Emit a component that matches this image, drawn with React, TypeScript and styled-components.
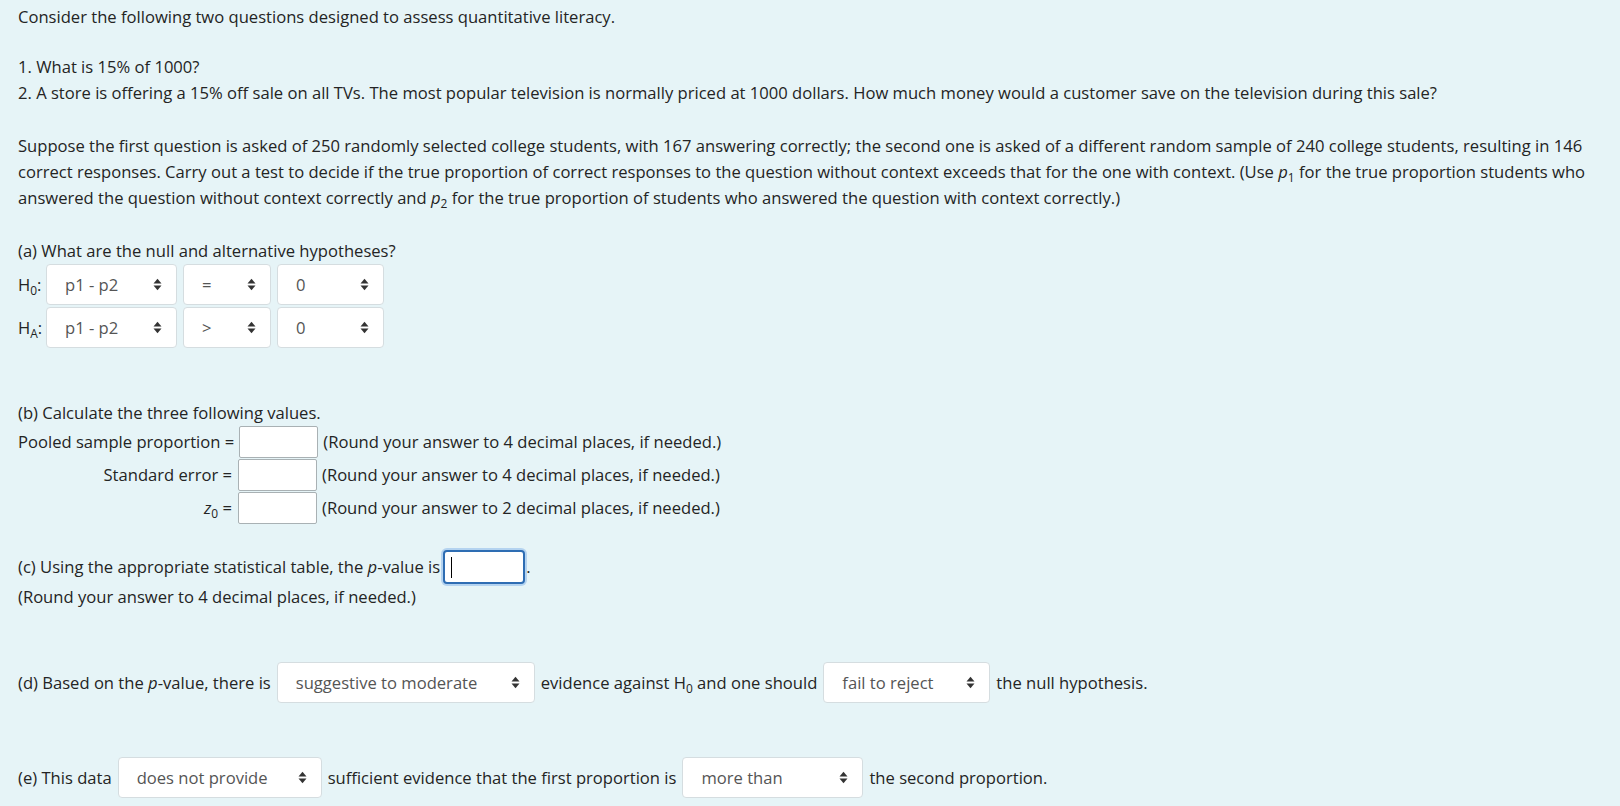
import React from "react";
import styled, { createGlobalStyle } from "styled-components";

const Global = createGlobalStyle`
  html, body { margin: 0; padding: 0; background: #e6f4f7; }
  body { font-family: "Open Sans", "Noto Sans", sans-serif; color: #242424; }
`;

const Page = styled.div`
  padding: 4px 20px 0 18px;
  font-size: 16.6px;
  line-height: 26px;
`;

const Line = styled.div<{ $mt?: number }>`
  margin-top: ${(p) => p.$mt ?? 0}px;
  height: 26px;
  white-space: nowrap;
`;

const Sub = styled.sub`
  font-size: 0.72em;
  vertical-align: -0.35em;
  line-height: 0;
`;

const Ital = styled.i`
  font-style: italic;
`;

const HypBlock = styled.div`
  display: flex;
  flex-direction: column;
  gap: 2px;
`;

const HypRow = styled.div`
  display: flex;
  align-items: center;
  gap: 6px;
`;

const HypLabel = styled.span`
  width: 22px;
  white-space: nowrap;
`;

const SelectBox = styled.div<{ $w: number; $h?: number }>`
  box-sizing: border-box;
  width: ${(p) => p.$w}px;
  height: ${(p) => p.$h ?? 41}px;
  display: inline-flex;
  align-items: center;
  justify-content: space-between;
  padding: 0 14px 0 18px;
  background: #ffffff;
  border: 1px solid #d5dde0;
  border-radius: 4px;
  color: #555;
  flex-shrink: 0;
  white-space: nowrap;
`;

const FlowRow = styled.div<{ $mt?: number; $h?: number; $gap?: number }>`
  margin-top: ${(p) => p.$mt ?? 0}px;
  height: ${(p) => p.$h ?? 41}px;
  display: flex;
  align-items: center;
  gap: ${(p) => p.$gap ?? 6}px;
  white-space: nowrap;
`;

const CalcBlock = styled.div`
  display: flex;
  flex-direction: column;
  gap: 1px;
`;

const CalcRow = styled.div`
  display: flex;
  align-items: center;
  height: 32px;
  white-space: nowrap;
`;

const CalcLabel = styled.span<{ $w?: number }>`
  width: ${(p) => (p.$w ? `${p.$w}px` : "auto")};
  text-align: right;
  padding-right: ${(p) => (p.$w ? 6 : 5)}px;
  box-sizing: border-box;
`;

const AnswerBox = styled.div`
  box-sizing: border-box;
  width: 79px;
  height: 32px;
  background: #fff;
  border: 1px solid #a9b1b4;
  border-radius: 2px;
  margin-right: 5px;
`;

const FocusBox = styled.div`
  box-sizing: border-box;
  width: 82px;
  height: 34px;
  background: #fff;
  border: 2px solid #2e6db3;
  border-radius: 4px;
  box-shadow: 0 0 0 2px rgba(120, 170, 230, 0.45);
  display: flex;
  align-items: center;
  padding-left: 6px;
`;

const Period = styled.span`
  margin-left: -2px;
`;

const Caret = styled.span`
  display: block;
  width: 1px;
  height: 21px;
  background: #000;
`;

const Arrows = () => (
  <svg width="9" height="13" viewBox="0 0 9 13">
    <polygon points="0.5,5.5 4.5,0.8 8.5,5.5" fill="#333" />
    <polygon points="0.5,7.5 8.5,7.5 4.5,12.2" fill="#333" />
  </svg>
);

const Select = ({ w, children }: { w: number; children: React.ReactNode }) => (
  <SelectBox $w={w}>
    <span>{children}</span>
    <Arrows />
  </SelectBox>
);

export default function App() {
  return (
    <>
      <Global />
      <Page>
        <Line>Consider the following two questions designed to assess quantitative literacy.</Line>
        <Line $mt={24}>1. What is 15% of 1000?</Line>
        <Line>
          2. A store is offering a 15% off sale on all TVs. The most popular television is normally priced at 1000 dollars. How much money would a customer save on the television during this sale?
        </Line>
        <Line $mt={27}>
          Suppose the first question is asked of 250 randomly selected college students, with 167 answering correctly; the second one is asked of a different random sample of 240 college students, resulting in 146
        </Line>
        <Line>
          correct responses. Carry out a test to decide if the true proportion of correct responses to the question without context exceeds that for the one with context. (Use <Ital>p</Ital>
          <Sub>1</Sub> for the true proportion students who
        </Line>
        <Line>
          answered the question without context correctly and <Ital>p</Ital>
          <Sub>2</Sub> for the true proportion of students who answered the question with context correctly.)
        </Line>

        <Line $mt={27}>(a) What are the null and alternative hypotheses?</Line>
        <HypBlock>
          <HypRow>
            <HypLabel>
              H<Sub>0</Sub>:
            </HypLabel>
            <Select w={131}>p1 - p2</Select>
            <Select w={88}>=</Select>
            <Select w={107}>0</Select>
          </HypRow>
          <HypRow>
            <HypLabel>
              H<Sub>A</Sub>:
            </HypLabel>
            <Select w={131}>p1 - p2</Select>
            <Select w={88}>&gt;</Select>
            <Select w={107}>0</Select>
          </HypRow>
        </HypBlock>

        <Line $mt={52}>(b) Calculate the three following values.</Line>
        <CalcBlock>
          <CalcRow>
            <CalcLabel>Pooled sample proportion =</CalcLabel>
            <AnswerBox />
            <span>(Round your answer to 4 decimal places, if needed.)</span>
          </CalcRow>
          <CalcRow>
            <CalcLabel $w={220}>Standard error =</CalcLabel>
            <AnswerBox />
            <span>(Round your answer to 4 decimal places, if needed.)</span>
          </CalcRow>
          <CalcRow>
            <CalcLabel $w={220}>
              <Ital>z</Ital>
              <Sub>0</Sub> =
            </CalcLabel>
            <AnswerBox />
            <span>(Round your answer to 2 decimal places, if needed.)</span>
          </CalcRow>
        </CalcBlock>

        <FlowRow $mt={26} $h={34} $gap={3}>
          <span>
            (c) Using the appropriate statistical table, the <Ital>p</Ital>-value is
          </span>
          <FocusBox>
            <Caret />
          </FocusBox>
          <Period>.</Period>
        </FlowRow>
        <Line>(Round your answer to 4 decimal places, if needed.)</Line>

        <FlowRow $mt={52}>
          <span>
            (d) Based on the <Ital>p</Ital>-value, there is
          </span>
          <Select w={258}>suggestive to moderate</Select>
          <span>
            evidence against H<Sub>0</Sub> and one should
          </span>
          <Select w={167}>fail to reject</Select>
          <span>the null hypothesis.</span>
        </FlowRow>

        <FlowRow $mt={54}>
          <span>(e) This data</span>
          <Select w={204}>does not provide</Select>
          <span>sufficient evidence that the first proportion is</span>
          <Select w={181}>more than</Select>
          <span>the second proportion.</span>
        </FlowRow>
      </Page>
    </>
  );
}
